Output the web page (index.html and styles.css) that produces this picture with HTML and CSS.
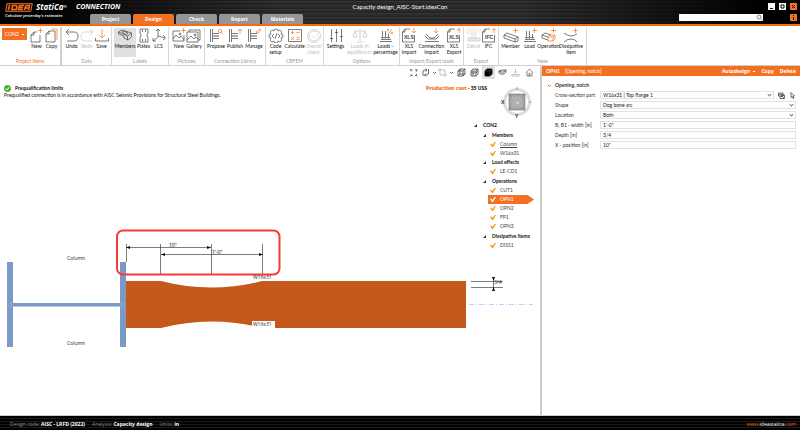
FILE: index.html
```html
<!DOCTYPE html>
<html lang="en">
<head>
<meta charset="utf-8">
<title>Capacity design_AISC-Start.ideaCon</title>
<link rel="stylesheet" href="styles.css">
</head>
<body>
<header class="titlebar">
  <div class="brand">
    <div class="brand-row">
      <svg class="logo" viewBox="0 0 28 9" aria-hidden="true"><path d="M2 .7H27.3L25.8 8.3H.7Z" fill="#1c0d04" stroke="#f37021"/><g fill="none" stroke="#f37021" stroke-width="1.5"><path d="M4.5 2L3.5 7M7.5 2.5H11L12 3.5L11.4 6.5H6.8ZM19 2.5H14.5L13.6 6.5H18M14.2 4.5H18M19.6 7L20.4 3.5L21.4 2.5H24.4L23.5 7M20.2 5H24"/></g></svg>
      <strong class="name">StatiCa<sup>®</sup></strong>
      <strong class="product">CONNECTION</strong>
    </div>
    <span class="slogan">Calculate yesterday's estimates</span>
  </div>
  <nav class="tabs">
    <a href="#project">Project</a><a href="#design" class="active">Design</a><a href="#check">Check</a><a href="#report">Report</a><a href="#materials">Materials</a>
  </nav>
  <div class="doc-title">Capacity design_AISC-Start.ideaCon</div>
  <div class="window-tools">
    <div class="window-buttons">
      <button aria-label="Minimize"><svg viewBox="0 0 7 7"><path d="M2 5.5H5"/></svg></button>
      <button aria-label="Maximize"><svg viewBox="0 0 7 7"><path d="M2 2H5V5H2Z"/></svg></button>
      <button class="close" aria-label="Close"><svg viewBox="0 0 7 7"><path d="M2 2L5 5M5 2L2 5"/></svg></button>
    </div>
    <div class="search-row">
      <label class="search"><input type="search" aria-label="Search"><svg viewBox="0 0 7 7"><circle cx="3" cy="3" r="2"/><path d="M4.5 4.5L6.5 6.5"/></svg></label>
      <button class="close" aria-label="Information"><svg viewBox="0 0 7 7"><path d="M3.5 1V2M3.5 3V6"/></svg></button>
    </div>
  </div>
</header>

<div class="ribbon">
  <section class="group g-project">
    <div class="tools">
      <button class="connection">CON2 <span class="caret"></span></button>
      <button class="tool"><svg viewBox="0 0 16 15"><path d="M11 7V14H2V7L5 4V7H2M5 4H8"/><path class="o" d="M11.5 0V5M9 2.500H14"/></svg>New</button>
      <button class="tool"><svg viewBox="0 0 16 15"><path d="M2 6L5 3H11V14H2ZM5 3V6H2"/><path class="o" d="M7 1H13V12"/></svg>Copy</button>
    </div>
    <h2>Project items</h2>
  </section>
  <section class="group g-data">
    <div class="tools">
      <button class="tool"><svg viewBox="0 0 16 15"><path d="M5 1L2 4L5 7M2 4H10Q14 4 14 8.500T10 13H3"/></svg>Undo</button>
      <button class="tool off"><svg viewBox="0 0 16 15"><path d="M11 1L14 4L11 7M14 4H6Q2 4 2 8.500T6 13H13"/></svg>Redo</button>
      <button class="tool"><svg viewBox="0 0 16 15"><path d="M1.500 10V13H14.500V10"/><path class="o" d="M8 1V10M5 7L8 10L11 7"/></svg>Save</button>
    </div>
    <h2>Data</h2>
  </section>
  <section class="group g-labels">
    <div class="tools">
      <button class="tool mid pressed"><svg viewBox="0 0 16 15"><path d="M1.500 4L5 2L14.500 5V9L11 12L7 10V8L1.500 6ZM1.500 4L10.500 8L14.500 5M10.500 8V12M5 4L7 3L11 5L9 6.500Z"/></svg>Members</button>
      <button class="tool"><svg viewBox="0 0 16 15"><path d="M4 1H12V5Q10 7.500 12 10V14H4V10Q6 7.500 4 5Z"/><path d="M6 3H7M9 3H10M6 12H7M9 12H10" stroke-width="1.400"/></svg>Plates</button>
      <button class="tool"><svg viewBox="0 0 16 15"><path d="M7 9V1M5 3L7 1L9 3M7 8L14 10M12 7L14.500 10L12 12M7 9L2 13M2 10V13H5"/></svg>LCS</button>
    </div>
    <h2>Labels</h2>
  </section>
  <section class="group g-pictures">
    <div class="tools">
      <button class="tool"><svg viewBox="0 0 16 15"><path d="M9 3H2V13H13V7M2 11L5 7L8 10L10 8L13 12"/><circle cx="9" cy="6" r="1"/><path class="o" d="M12.500 0V5M10 2.500H15"/></svg>New</button>
      <button class="tool"><svg viewBox="0 0 16 15"><path d="M1 4H12V14H1ZM3 4V2H14V12H12M1 12L5 8L8 11L10 9L12 11"/><circle cx="9" cy="7" r="1"/></svg>Gallery</button>
    </div>
    <h2>Pictures</h2>
  </section>
  <section class="group g-library">
    <div class="tools">
      <button class="tool mid"><svg viewBox="0 0 16 15"><path d="M2.500 1V14M4.500 1V14M5 5.500H11M5 10.500H11"/><path d="M5 8H11" stroke-width="1.500" opacity=".6"/><g class="o"><circle cx="12" cy="3" r="1.700"/><path d="M13 4L15 6"/></g></svg>Propose</button>
      <button class="tool mid"><svg viewBox="0 0 16 15"><path d="M2.500 1V14M4.500 1V14M5 5.500H11M5 10.500H11"/><path d="M5 8H11" stroke-width="1.500" opacity=".6"/><path class="o" d="M13 6V1M11 3L13 1L15 3"/></svg>Publish</button>
      <button class="tool mid"><svg viewBox="0 0 16 15"><path d="M2.500 1V14M4.500 1V14M5 5.500H11M5 10.500H11"/><path d="M5 8H11" stroke-width="1.500" opacity=".6"/><path class="o" d="M10 5L11 3L14 1L15 2L12 5Z"/></svg>Manage</button>
    </div>
    <h2>Connection Library</h2>
  </section>
  <section class="group g-cbfem">
    <div class="tools">
      <button class="tool mid"><svg viewBox="0 0 16 15"><path d="M7 1H9L10 3L12 2L14 4L13 6L15 7V9L13 10L14 12L12 14L10 13L9 15H7L6 13L4 14L2 12L3 10L1 9V7L3 6L2 4L4 2L6 3ZM6 6L4 8L6 10M10 6L12 8L10 10M9 5L7 11"/></svg>Code<br>setup</button>
      <button class="tool mid"><svg viewBox="0 0 16 15"><path d="M1.500 1.500H14.500V13.500H1.500Z"/><path class="o" d="M4 4.500H7M5.500 3V6M9.500 4.500H12.500M4 9L7 12M7 9L4 12M9.500 9.500H12.500M9.500 11.500H12.500"/></svg>Calculate</button>
      <button class="tool mid off"><svg viewBox="0 0 16 15"><circle cx="8" cy="8" r="6.500"/><path d="M11 4A5 5 0 1 0 13 8"/><path class="o" d="M5 7L8 10L14 3"/></svg>Overall<br>check</button>
    </div>
    <h2>CBFEM</h2>
  </section>
  <section class="group g-options">
    <div class="tools">
      <button class="tool mid"><svg viewBox="0 0 16 15"><path d="M3.500 1V14M8.500 1V14M13.500 1V14M2 10.500H5M7 4.500H10M12 8.500H15"/></svg>Settings</button>
      <button class="tool wide off"><svg viewBox="0 0 16 15"><path d="M8 1V13M5 14H11M3 3H13M3 3L1 9H5ZM13 3L11 9H15M13 3L15 9"/></svg>Loads in<br>equilibrium</button>
      <button class="tool wide"><svg viewBox="0 0 16 15"><path d="M2 13.500H14M3 11.500H13M4.500 3V10M7.500 3V10M10.500 6V10M3 9L4.500 10.500L6 9L7.500 10.500L9 9L10.500 10.500L12 9"/><g class="o"><path d="M14 1L10 6"/><circle cx="10" cy="2" r=".8"/><circle cx="14" cy="5" r=".8"/></g></svg>Loads -<br>percentage</button>
    </div>
    <h2>Options</h2>
  </section>
  <section class="group g-import">
    <div class="tools">
      <button class="tool mid"><svg viewBox="0 0 16 15"><path d="M13.500 7V14H1.500V4L4 1H9M4 1V4H1.500"/><text x="3" y="11">XLS</text><path class="o" d="M13 0V5M11 3L13 5L15 3"/></svg>XLS<br>Import</button>
      <button class="tool wide"><svg viewBox="0 0 16 15"><path d="M1 13.500H15M2 6L6 10H10L14 6M1 8L4 11H12L15 8"/><path class="o" d="M12 0V5M10 3L12 5L14 3"/></svg>Connection<br>Import</button>
      <button class="tool mid"><svg viewBox="0 0 16 15"><path d="M13.500 7V14H1.500V4L4 1H9M4 1V4H1.500"/><text x="3" y="11">XLS</text><path class="o" d="M13 5V0M11 2.500L13 .5L15 2.500"/></svg>XLS<br>Export</button>
    </div>
    <h2>Import/Export loads</h2>
  </section>
  <section class="group g-export">
    <div class="tools">
      <button class="tool off"><svg viewBox="0 0 16 15"><path class="o" d="M1 1H11V5H1ZM14 6V1M12.500 2.500L14 1L15.500 2.500M3 3H9"/><path d="M6 5V10M9 5V10M2 10H14V13H2ZM4 10V13M6 10V13M8 10V13M10 10V13M12 10V13"/></svg>Detail</button>
      <button class="tool"><svg viewBox="0 0 16 15"><path d="M13.500 7V14H1.500V4L4 1H9M4 1V4H1.500"/><text x="4" y="11">IFC</text><path class="o" d="M13 5V0M11 2.500L13 .5L15 2.500"/></svg>IFC</button>
    </div>
    <h2>Export</h2>
  </section>
  <section class="group g-new">
    <div class="tools">
      <button class="tool mid"><svg viewBox="0 0 16 15"><path d="M1 7L4 5L15 9V13L12 14L1 10ZM1 7L12 11L15 9M12 11V14"/><path class="o" d="M12.500 0V5M10 2.500H15"/></svg>Member</button>
      <button class="tool mid"><svg viewBox="0 0 16 15"><path d="M2 13.500H14M3 11.500H13M4.500 3V10M7.500 3V10M10.500 6V10M3 9L4.500 10.500L6 9L7.500 10.500L9 9L10.500 10.500L12 9"/><path class="o" d="M12.500 0V5M10 2.500H15"/></svg>Load</button>
      <button class="tool mid"><svg viewBox="0 0 16 15"><path d="M7 12L1 10V7L4 5L10 7M1 7L7 9"/><path class="o" d="M7 9L9 7H14V11L12 13H7ZM7 9H12V13M12 9L14 7M12.500 0V5M10 2.500H15"/></svg>Operation</button>
      <button class="tool wide"><svg viewBox="0 0 16 15"><path d="M1 5Q5 8 8 8T14 6M1 14Q4 11 8 11T14 14"/><path class="o" d="M12.500 0V5M10 2.500H15"/></svg>Dissipative<br>item</button>
    </div>
    <h2>New</h2>
  </section>
</div>

<main class="workspace">
  <section class="viewport">
    <svg class="drawing" viewBox="0 0 540 350" preserveAspectRatio="xMinYMin" role="img" aria-label="Side view of the connection">
      <g fill="#7a9ac5"><path d="M7 196H13V281H7ZM120 196H126V281H120ZM10 237H123V240.500H10Z"/></g>
      <g fill="none" stroke="#9bb9e3" stroke-width=".6"><circle cx="10.500" cy="238.700" r="1.700"/><circle cx="122.500" cy="238.700" r="1.700"/></g>
      <path fill="#c5581b" d="M126 215H161Q211 228 262 215H466V262H262Q211 249 161 262H126Z"/>
      <g fill="#fff"><path d="M252 208H275V214H252ZM252 255H275V262H252Z"/></g>
      <g class="dim"><path d="M126.500 178V196M160.500 178V209M211.500 178V209M262.500 178V209M126 181.500H211M161 188.500H263"/><path class="arrow" d="M126 181.500L130 180V183ZM211 181.500L207 180V183ZM161 188.500L165 187V190ZM263 188.500L259 187V190Z"/><path d="M471 215.500H503M471 221.500H503M493.500 211V225"/><path class="arrow" d="M493.500 215L492 211H495ZM493.500 221L492 225H495Z"/></g>
      <g fill="#f2f2f2"><path d="M169 176H177V181H169ZM212 183H222V188H212Z"/></g>
      <rect x="117" y="164.500" width="162.500" height="44" rx="6" fill="none" stroke="#f83a3a" stroke-width="2"/>
      <path d="M469 238.500H533" stroke="#b5d5f8" stroke-dasharray="5 2 1 2"/>
      <text x="67" y="194">Column</text><text x="67" y="279">Column</text>
      <text x="169" y="181">10"</text><text x="212" y="188">1'-0"</text>
      <text x="253" y="213">W16x31</text><text x="253" y="260">W16x31</text><text x="494" y="218">3/4</text>
    </svg>
    <div class="notice">
      <h1><svg viewBox="0 0 7 7"><circle cx="3.500" cy="3.500" r="3.500" fill="#45b52f"/><path d="M1.700 3.500L3 5L5.300 2.200" fill="none" stroke="#fff"/></svg>Prequalification limits</h1>
      <p>Prequalified connection is in accordance with AISC Seismic Provisions for Structural Steel Buildings.</p>
    </div>
    <aside class="scene">
      <div class="view-tools">
        <button aria-label="Fit all"><svg viewBox="0 0 9 9"><path d="M2 3.500V2H3.500M6 2H7.500V3.500M7.500 6V7.500H6M3.500 7.500H2V6M1 1L2 2M8.500 1L7.500 2M1 8.500L2 7.500M8.500 8.500L7.500 7.500"/></svg></button>
        <button aria-label="Rotate"><svg viewBox="0 0 9 9"><path d="M2 8V3Q2 2 6 2M4.500 .5L6 2L4.500 3.500M7.500 1V6Q7.500 7 3.500 7M5 5.500L3.500 7L5 8.500"/></svg></button>
        <button class="more" aria-label="Rotation options"><svg viewBox="0 0 5 9"><path d="M1 4L2.500 5.500L4 4"/></svg></button>
        <button class="dim-icon" aria-label="Crop"><svg viewBox="0 0 9 9"><path d="M2 0V7H9M0 2H7V9"/></svg></button>
        <button class="more" aria-label="Crop options"><svg viewBox="0 0 5 9"><path d="M1 4L2.500 5.500L4 4"/></svg></button>
        <button class="box" aria-label="Wireframe"><svg viewBox="0 0 9 9"><path d="M1 3L3 1H8V6L6 8H1ZM1 3H6V8M6 3L8 1M3 1V6H8M3 6L1 8"/></svg></button>
        <button class="box" aria-label="Transparent"><svg viewBox="0 0 9 9"><path d="M1 3L3 1H8V6L6 8H1ZM1 3H6V8M6 3L8 1M1 5H6L8 3M3 3V8"/></svg></button>
        <button class="box pressed" aria-label="Solid"><svg viewBox="0 0 9 9"><path d="M1 3L3 1H8V6L6 8H1Z" fill="#000" stroke="#000"/><path d="M1.500 3H6V8M6 3L8 1" stroke="#888" stroke-width=".4"/></svg></button>
        <button class="box" aria-label="Plates"><svg viewBox="0 0 9 9"><path d="M1 3L4 2H8V4L6 6H3L1 5ZM1 3L3 4H6L8 2"/></svg></button>
        <button class="box dim-icon" aria-label="Loads"><svg viewBox="0 0 9 9"><path d="M4.500 1V5M3 3.500L4.500 5L6 3.500M1 5.500V8H8V5.500M2 6.500H7"/></svg></button>
        <button class="box" aria-label="Home view"><svg viewBox="0 0 9 9"><path d="M1 4.500L4.500 1L8 4.500M2 4V8H7V4M4 8V5.500H5V8" stroke-width=".6"/></svg></button>
      </div>
      <div class="scene-head">
        <p class="cost"><b>Production cost</b> - 35 US$</p>
        <svg class="cube" viewBox="0 0 34 34"><circle cx="17" cy="17" r="12.500" fill="#fff" stroke="#dcdcdc" stroke-width="3"/><path d="M9 9H25V25H9Z" fill="#a2a2a2" stroke="none"/><path d="M11.500 11.500H22.500V22.500H11.500Z" fill="#b0b0b0" stroke="none"/><path d="M9 9L11.500 11.500M25 9L22.500 11.500M9 25L11.500 22.500M25 25L22.500 22.500M17 2V5M29 17H32M9 9H25V25H9Z" stroke="#777" stroke-width=".6"/><text x="1" y="19">X</text><text x="15" y="33">Y</text><text x="15.500" y="18.500" class="z">-z</text></svg>
      </div>
      <div class="tree">
        <div class="branch root">CON2</div>
        <div class="leafs"><div class="branch">Members</div>
          <label class="leaf"><input type="checkbox" checked><u>Column</u></label>
          <label class="leaf"><input type="checkbox" checked>W16x31</label></div>
        <div class="leafs"><div class="branch">Load effects</div>
          <label class="leaf"><input type="checkbox" checked>LE-CD1</label></div>
        <div class="leafs"><div class="branch">Operations</div>
          <label class="leaf"><input type="checkbox" checked>CUT1</label>
          <label class="leaf selected"><input type="checkbox" checked>OPN1</label>
          <label class="leaf"><input type="checkbox" checked>OPN2</label>
          <label class="leaf"><input type="checkbox" checked>FP1</label>
          <label class="leaf"><input type="checkbox" checked>OPN3</label></div>
        <div class="leafs"><div class="branch">Dissipative items</div>
          <label class="leaf"><input type="checkbox" checked>DISS1</label></div>
      </div>
    </aside>
  </section>

  <section class="properties">
    <header class="panel-head">
      <b>OPN1</b><span>[Opening, notch]</span>
      <div class="actions"><button>Autodesign <span class="caret"></span></button><button>Copy</button><button>Delete</button></div>
    </header>
    <form class="fields">
      <h2><svg viewBox="0 0 5 5"><path d="M1 2L2.500 3.500L4 2"/></svg>Opening, notch</h2>
      <label for="part">Cross-section part</label>
      <div class="with-tools">
        <div class="pick"><select id="part"><option>W16x31 | Top flange 1</option></select></div>
        <button type="button" aria-label="Edit part"><svg viewBox="0 0 7 7"><path d="M.5 1H5V4H.5ZM.5 2.500H5M2 4V6.500H6.500V3H5M3 5L6 3M3 3L6 6"/></svg></button>
        <button type="button" aria-label="Pick part"><svg viewBox="0 0 7 7"><path d="M2 .5V5.500L3.200 4.500L4 6.500L5 6L4 4H5.500Z"/></svg></button>
      </div>
      <label for="shape">Shape</label>
      <div class="pick"><select id="shape"><option>Dog bone arc</option></select></div>
      <label for="location">Location</label>
      <div class="pick"><select id="location"><option>Both</option></select></div>
      <label for="width">B, B1 - width [in]</label><input id="width" value="1'-0&quot;">
      <label for="depth">Depth [in]</label><input id="depth" value="3/4">
      <label for="position">X - position [in]</label><input id="position" value="10&quot;">
    </form>
  </section>
</main>

<footer class="status">
  <span>Design code: <b>AISC - LRFD (2022)</b></span>
  <span>Analysis: <b>Capacity design</b></span>
  <span>Units: <b>in</b></span>
  <a href="#site">www.<b>ideastatica</b>.com</a>
</footer>
</body>
</html>
```
FILE: styles.css
```css
* { box-sizing: border-box; }
body {
  margin: 0;
  height: 100vh;
  display: flex;
  flex-direction: column;
  font: 5px/6px Lato, "Open Sans", sans-serif;
  color: #111;
  background: #fff;
}
h1, h2, p { margin: 0; font-size: inherit; }
button, input, select { font: inherit; color: inherit; border: 0; padding: 0; margin: 0; background: none; }
svg { display: block; fill: none; stroke: currentColor; }
svg text { stroke: none; fill: #222; }

.titlebar {
  flex: none;
  height: 26px;
  display: flex;
  position: relative;
  color: #fff;
  background: linear-gradient(90deg, #000 5%, transparent 35%, transparent 65%, #000 95%), repeating-linear-gradient(#222 0 1px, #363636 1px 2px, #2a2a2a 2px 4px);
  border-bottom: 2px solid #f96a10;
}
.brand { width: 90px; flex: none; padding: 2px 0 0 5px; white-space: nowrap; font-family: "Open Sans", sans-serif; }
.brand-row { display: flex; align-items: center; height: 10px; }
.logo { width: 28px; height: 9px; flex: none; }
.name, .product { font-style: italic; line-height: 10px; }
.name { font-size: 8px; margin-left: 3px; }
.name sup { font-size: 4px; line-height: 4px; vertical-align: 2px; }
.product { font-size: 7px; margin-left: 9px; }
.slogan { display: block; font-size: 4px; line-height: 7px; font-style: italic; font-weight: 600; }
.tabs { display: flex; align-items: flex-end; gap: 2px; }
.tabs a {
  width: 41px;
  height: 10px;
  line-height: 10px;
  text-align: center;
  color: #fff;
  font-family: "Open Sans", sans-serif;
  font-weight: 700;
  text-decoration: none;
  background: #959595;
  border-radius: 2px 2px 0 0;
}
.tabs .active { background: #f37021; }
.doc-title { position: absolute; inset: 3px 0 auto; text-align: center; font-size: 6px; line-height: 8px; }
.window-tools { position: relative; margin-left: auto; padding: 3px 3px 0 0; }
.window-buttons { display: flex; justify-content: flex-end; gap: 4px; margin-bottom: 4px; }
.window-tools button { width: 7px; height: 7px; background: #f4f4f4; color: #111; }
.window-tools .close { background: #f37021; }
.search-row { display: flex; gap: 27px; }
.search { display: flex; width: 84px; height: 7px; background: #fff; color: #888; }
.search input { width: 100%; min-width: 0; outline: 0; appearance: none; }
.search svg { width: 7px; height: 7px; flex: none; }

.ribbon { display: flex; flex: none; height: 40px; border-bottom: 1px solid #d0d0d0; }
.group { flex: none; display: flex; flex-direction: column; justify-content: space-between; border-right: 1px solid #d8d8d8; margin-top: 1px; padding: 1px 0 0; }
.group h2 { font-weight: 400; text-align: center; color: #999; white-space: nowrap; line-height: 7px; }
.tools { display: flex; justify-content: center; }
.g-project { width: 62px; border-right: 2px solid #d0d0d0; }
.g-project .tools { justify-content: flex-start; padding-left: 2px; }
.g-project h2 { color: #f37021; }
.g-data { width: 50px; }
.g-labels { width: 57px; }
.g-pictures { width: 36px; }
.g-library { width: 61px; }
.g-cbfem { width: 58px; }
.g-options { width: 76px; }
.g-import { width: 64px; }
.g-export { width: 35px; }
.g-new { width: 88px; }
.connection { width: 25px; height: 12px; margin-right: 2px; color: #fff; background: #f37021; flex: none; white-space: nowrap; }
.caret { display: inline-block; width: 2px; height: 1px; background: currentColor; margin: 0 0 1px 2px; }
.tool { width: 15px; height: 29px; display: flex; flex-direction: column; align-items: center; flex: none; white-space: nowrap; text-align: center; }
.tool svg { width: 16px; height: 15px; flex: none; color: #444; stroke-width: .7; }
.tool svg text { font: 700 5px/5px "Liberation Sans", sans-serif; fill: #444; }
.mid { width: 19px; }
.wide { width: 26px; }
.g-labels .mid, .g-options .mid { width: 22px; }
.pressed { background: #e0e0e0; }
.off { opacity: .3; }
.o { stroke: #f37021; }

.workspace { flex: 1; min-height: 0; display: flex; border-bottom: 1px solid #ccc; }
.viewport { flex: 540; min-width: 0; position: relative; display: flex; justify-content: space-between; }
.drawing { position: absolute; inset: 0; width: 100%; }
.drawing, .drawing text { stroke: none; font: 5px "Open Sans", sans-serif; }
.dim { stroke: #444; stroke-width: .7; }
.dim .arrow { fill: #111; stroke: none; }
.notice { position: relative; padding: 19px 0 0 4px; white-space: nowrap; }
.notice h1 { display: flex; align-items: center; gap: 4px; line-height: 7px; }
.notice svg { width: 7px; height: 7px; stroke: none; }
.scene { position: relative; width: 132px; }
.view-tools { display: flex; justify-content: flex-end; align-items: center; height: 13px; padding-right: 4px; }
.view-tools button { width: 12px; height: 13px; display: flex; align-items: center; justify-content: center; }
.view-tools .more { width: 6px; }
.view-tools .box { width: 14px; }
.view-tools svg { height: 9px; color: #444; stroke-width: .8; }
.view-tools .dim-icon { opacity: .4; }
.scene-head { display: flex; justify-content: space-between; padding: 6px 6px 0 18px; height: 41px; white-space: nowrap; }
.cost { font-weight: 700; font-family: "Open Sans", sans-serif; }
.cost b { color: #f37021; }
.cube { width: 34px; height: 34px; }
.cube text { font-size: 5px; font-weight: 700; }
.cube .z { fill: #fff; font-size: 4px; }
.tree { padding: 1px 6px 0 66px; line-height: 9px; }
.branch { font-weight: 700; display: flex; align-items: center; gap: 6px; height: 9px; white-space: nowrap; }
.branch::before { content: ""; width: 3px; height: 3px; background: #333; clip-path: polygon(100% 0, 100% 100%, 0 100%); }
.leafs { padding-left: 9px; margin-top: 1px; }
.leafs + .leafs { margin-top: 0; }
.leafs:nth-child(n + 4) { margin-top: 1px; }
.leaf { display: flex; align-items: center; gap: 4px; height: 9px; margin-left: 5px; padding-left: 2px; color: #444; }
.leaf input { appearance: none; width: 6px; height: 6px; background: #f7941d; clip-path: polygon(0 45%, 20% 35%, 40% 60%, 85% 0, 100% 10%, 45% 100%); }
.selected { color: #fff; background: #f37021; clip-path: polygon(0 0, 86% 0, 100% 50%, 86% 100%, 0 100%); }
.selected input { background: #fff; }

.properties { flex: 258; min-width: 0; border-left: 2px solid #ccc; }
.panel-head { display: flex; align-items: center; gap: 5px; height: 10px; padding: 0 4px; color: #fff; background: #f37021; }
.actions { margin-left: auto; display: flex; gap: 6px; }
.actions button { font-weight: 700; font-family: "Open Sans", sans-serif; }
.fields { display: grid; grid-template-columns: 45px 1fr; grid-auto-rows: 8px; row-gap: 2px; padding: 5px 4px 0 13px; align-items: center; color: #333; }
.fields h2 { grid-column: 1 / -1; display: flex; align-items: center; gap: 3px; margin-left: -8px; }
.fields h2 svg { width: 5px; height: 5px; color: #f37021; }
.fields label { white-space: nowrap; }
.fields select, .fields input { appearance: none; width: 100%; height: 8px; border: 1px solid #e2e2e2; padding: 0 2px; line-height: 6px; color: #111; background: #fff; display: block; }
.pick { position: relative; flex: 1; }
.pick::after { content: ""; position: absolute; right: 3px; top: 2px; width: 2px; height: 2px; border: solid #777; border-width: 0 1px 1px 0; transform: rotate(45deg); pointer-events: none; }
.with-tools { display: flex; gap: 4px; align-items: center; }
.with-tools button svg { width: 7px; height: 7px; stroke-width: .7; }

.status { flex: none; height: 14px; display: flex; align-items: center; gap: 7px; padding: 1px 4px 0 10px; color: #888; background: repeating-linear-gradient(#000 0 2px, #1c1c1c 2px 3px); }
.status b { color: #fff; }
.status, .status b { font-family: "Open Sans", sans-serif; }
.status a { margin-left: auto; color: #e36418; text-decoration: none; }
.status a b { font-weight: 400; }
```
